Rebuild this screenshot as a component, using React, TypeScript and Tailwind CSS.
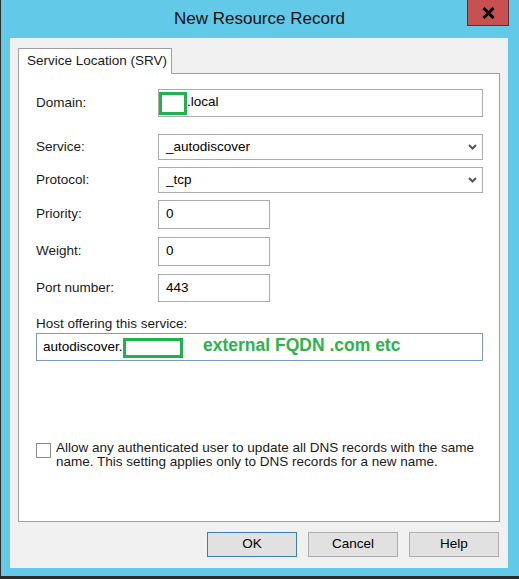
import { ReactNode } from 'react'

const font = { fontFamily: '"Liberation Sans", Arial, sans-serif' }

function Row({ label, children, className = '' }: { label: string; children: ReactNode; className?: string }) {
  return (
    <div className={`flex items-center ${className}`}>
      <div className="w-[122px] text-[13.5px] text-[#1a1a1a]">{label}</div>
      {children}
    </div>
  )
}

function TextBox({ value, className = '' }: { value: string; className?: string }) {
  return (
    <div className={`flex items-center border border-[#ababab] bg-white pl-[7px] text-[13.5px] text-black ${className}`}>
      {value}
    </div>
  )
}

function Select({ value, className = '' }: { value: string; className?: string }) {
  return (
    <div className={`flex items-center justify-between border border-[#ababab] bg-white pl-[7px] pr-[5px] text-[13.5px] text-black ${className}`}>
      <span>{value}</span>
      <svg width="9" height="6" viewBox="0 0 9 6">
        <polyline points="1,1 4.5,4.5 8,1" fill="none" stroke="#555" strokeWidth="2" />
      </svg>
    </div>
  )
}

function Button({ label, isDefault = false }: { label: string; isDefault?: boolean }) {
  return (
    <div
      className={`flex h-[25px] w-[90px] items-center justify-center border bg-[#e1e1e1] text-[13.5px] text-black ${
        isDefault ? 'border-[#3c7fb1]' : 'border-[#adadad]'
      }`}
    >
      {label}
    </div>
  )
}

export default function App() {
  return (
    <div style={font} className="flex h-[579px] w-[519px] flex-col border-b-[3px] border-l border-[#2b2b2b] bg-[#63c9e9]">
      {/* Title bar */}
      <div className="relative flex h-[38px] shrink-0 items-center justify-center pr-px">
        <span className="text-[17px] text-[#111]">New Resource Record</span>
        <div className="absolute right-[10px] top-0 flex h-[26px] w-[42px] items-center justify-center border border-t-0 border-[#5a3030] bg-[#c75050]">
          <svg width="13" height="12" viewBox="0 0 13 12">
            <path d="M1.5 1 L11.5 11 M11.5 1 L1.5 11" stroke="#000" strokeWidth="3" />
          </svg>
        </div>
      </div>

      {/* Client area */}
      <div className="ml-[9px] flex h-[530px] w-[498px] flex-col bg-[#f0f0f0] px-[8px] pt-[10px]">
        <div className="relative z-10 -mb-px flex h-[26px] w-[154px] items-center border border-b-0 border-[#a0a0a0] bg-white pl-[8px] text-[13.5px] text-[#1a1a1a]">
          Service Location (SRV)
        </div>
        <div className="flex h-[449px] w-[482px] flex-col border border-[#a0a0a0] bg-white pl-[17px] pt-[15px]">
          <Row label="Domain:">
            <div className="flex h-[28px] w-[325px] items-center border border-[#ababab] bg-white text-[13.5px] text-black">
              <span className="inline-block h-[23px] w-[28px] border-[3px] border-[#22b14c] bg-white" />
              <span className="-mt-[2px]">.local</span>
            </div>
          </Row>
          <Row label="Service:" className="mt-[17px]">
            <Select value="_autodiscover" className="h-[26px] w-[325px]" />
          </Row>
          <Row label="Protocol:" className="mt-[7px]">
            <Select value="_tcp" className="h-[26px] w-[325px]" />
          </Row>
          <Row label="Priority:" className="mt-[7px]">
            <TextBox value="0" className="h-[29px] w-[112px]" />
          </Row>
          <Row label="Weight:" className="mt-[8px]">
            <TextBox value="0" className="h-[29px] w-[112px]" />
          </Row>
          <Row label="Port number:" className="mt-[8px]">
            <TextBox value="443" className="h-[28px] w-[112px]" />
          </Row>

          <div className="mt-[14px] text-[13.5px] leading-[15px] text-[#1a1a1a]">Host offering this service:</div>
          <div className="relative mt-[2px] flex h-[28px] w-[447px] items-center border border-[#7a9ac0] bg-white pl-[6px] text-[13.5px] text-black">
            autodiscover.
            <span className="absolute left-[86px] top-[4px] h-[20px] w-[60px] border-[3px] border-[#22b14c] bg-white" />
            <span className="absolute left-[166px] -top-[2px] text-[17.5px] font-bold text-[#2db34a]">external FQDN .com etc</span>
          </div>

          <div className="mt-[80px] flex items-start gap-[5px]">
            <span className="mt-[2px] h-[15px] w-[15px] shrink-0 border border-[#8a8a8a] bg-white" />
            <p className="text-[13.5px] leading-[14px] text-[#1a1a1a]">
              Allow any authenticated user to update all DNS records with the same
              <br />
              name. This setting applies only to DNS records for a new name.
            </p>
          </div>
        </div>

        <div className="mt-[10px] flex justify-end gap-[11px] pr-[1px]">
          <Button label="OK" isDefault />
          <Button label="Cancel" />
          <Button label="Help" />
        </div>
      </div>
    </div>
  )
}
